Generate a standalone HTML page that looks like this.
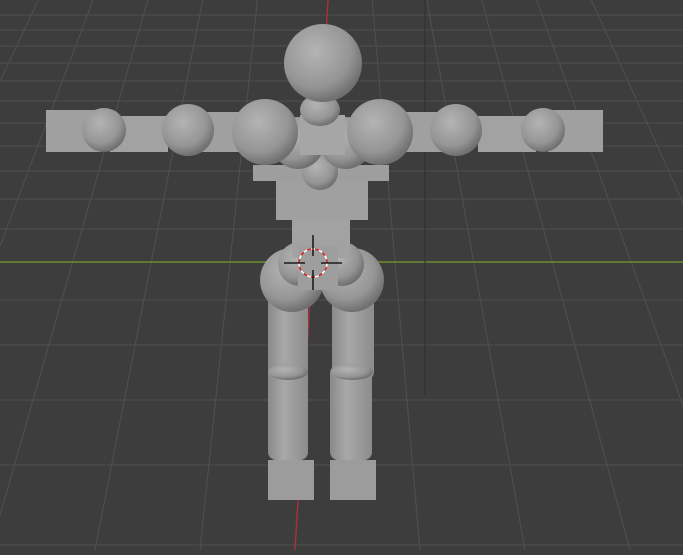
<!DOCTYPE html>
<html><head><style>html,body{margin:0;padding:0;background:#3d3d3d;overflow:hidden}</style></head><body>
<svg width="683" height="550" viewBox="0 0 683 550" xmlns="http://www.w3.org/2000/svg">
<defs>
<radialGradient id="s" cx="0.4" cy="0.35" r="0.65"><stop offset="0" stop-color="#b4b4b4"/><stop offset="0.7" stop-color="#959595"/><stop offset="1" stop-color="#707070"/></radialGradient>
<linearGradient id="c" x1="0" x2="1"><stop offset="0" stop-color="#8a8a8a"/><stop offset="0.4" stop-color="#a8a8a8"/><stop offset="1" stop-color="#8c8c8c"/></linearGradient>
</defs>
<rect width="683" height="550" fill="#3d3d3d"/>
<g stroke="#505050" stroke-width="1" fill="none">
<path d="M0 15H683M0 30H683M0 46H683M0 63H683M0 81H683M0 101H683M0 123H683M0 146H683M0 171H683M0 199H683M0 229H683M0 300H683M0 345H683M0 400H683M0 465H683M0 545H683"/>
<g id="v">
<path d="M320 -600L-10 550M320 -600L95 550M320 -600L200 550M320 -600L420 550M320 -600L525 550M320 -600L630 550M320 -600L735 550M320 -600L840 550M320 -600L-115 550M320 -600L-220 550"/>
</g>
</g>
<line x1="0" y1="262" x2="683" y2="262" stroke="#6a8f2e" stroke-width="1.5"/>
<line x1="425" y1="0" x2="425" y2="395" stroke="#2e2e2e" stroke-width="1"/>
<line x1="328" y1="0" x2="295" y2="550" stroke="#b03040" stroke-width="1.3"/>
<g fill="url(#s)">
<!-- legs -->
<rect x="268" y="290" width="40" height="90" rx="8" fill="url(#c)"/>
<rect x="332" y="290" width="42" height="90" rx="8" fill="url(#c)"/>
<rect x="268" y="365" width="40" height="95" rx="8" fill="url(#c)"/>
<rect x="330" y="365" width="42" height="95" rx="8" fill="url(#c)"/>
<ellipse cx="288" cy="372" rx="20" ry="8"/>
<ellipse cx="352" cy="372" rx="21" ry="8"/>
<rect x="268" y="460" width="46" height="40" fill="#9c9c9c"/>
<rect x="330" y="460" width="46" height="40" fill="#9c9c9c"/>
<!-- hips -->
<circle cx="292" cy="280" r="32"/>
<circle cx="352" cy="280" r="32"/>
<circle cx="300" cy="264" r="22"/>
<circle cx="342" cy="264" r="22"/>
<rect x="292" y="210" width="58" height="48" fill="#a2a2a2"/>
<rect x="298" y="245" width="40" height="45" fill="#9e9e9e"/>
<!-- torso -->
<rect x="276" y="178" width="92" height="42" fill="#a0a0a0"/>
<rect x="253" y="165" width="136" height="16" fill="#9e9e9e"/>
<circle cx="320" cy="172" r="18"/>
<!-- arms -->
<rect x="46" y="110" width="55" height="42" fill="#a0a0a0"/>
<rect x="110" y="116" width="58" height="36" fill="#a2a2a2"/>
<rect x="190" y="112" width="52" height="40" fill="#a0a0a0"/>
<rect x="400" y="112" width="52" height="40" fill="#a0a0a0"/>
<rect x="478" y="116" width="58" height="36" fill="#a2a2a2"/>
<rect x="548" y="110" width="55" height="42" fill="#a0a0a0"/>
<circle cx="104" cy="130" r="22"/>
<circle cx="188" cy="130" r="26"/>
<circle cx="456" cy="130" r="26"/>
<circle cx="543" cy="130" r="22"/>
<circle cx="298" cy="143" r="26"/>
<circle cx="346" cy="143" r="26"/>
<circle cx="265" cy="132" r="33"/>
<circle cx="380" cy="132" r="33"/>
<rect x="300" y="115" width="45" height="40" fill="#a6a6a6"/>
<!-- neck/head -->
<ellipse cx="320" cy="110" rx="20" ry="16"/>
<circle cx="323" cy="63" r="39"/>
</g>
<!-- 3D cursor -->
<circle cx="313" cy="263" r="14" fill="none" stroke="#fff" stroke-width="1.5" stroke-dasharray="4 4"/>
<circle cx="313" cy="263" r="14" fill="none" stroke="#e02020" stroke-width="1.5" stroke-dasharray="4 4" stroke-dashoffset="4"/>
<path d="M313 235V256M313 270V290M284 263H305M321 263H342" stroke="#000" stroke-width="1.3"/>
</svg>
</body></html>
